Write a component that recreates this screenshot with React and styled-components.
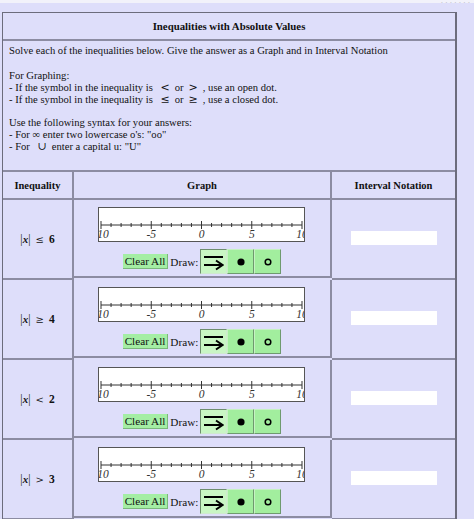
import React from 'react'
import styled, { createGlobalStyle } from 'styled-components'

const GlobalStyle = createGlobalStyle`
  html, body {
    margin: 0;
    padding: 0;
    background: #dedefa;
    font-family: "Liberation Serif", "Times New Roman", serif;
    color: #111;
  }
`

const TopStrip = styled.div`
  height: 3px;
  background: #f2f2fa;
  overflow: hidden;
  text-align: right;
  font-size: 9px;
  line-height: 0;
  color: #b8b8c4;
  padding-right: 4px;
`

const Frame = styled.div`
  margin: 9px 0 0 2px;
  width: 452px;
  border: 1px solid #6c6c7c;
  border-right: 2px solid #6c6c7c;
  border-bottom: none;
`

const Title = styled.div`
  height: 26px;
  line-height: 26px;
  text-align: center;
  font-weight: bold;
  font-size: 10.8px;
  border-bottom: 2px solid #8c8ca2;
`

const Instructions = styled.div`
  padding: 4px 6px 17px;
  font-size: 10.6px;
  line-height: 12px;
  border-bottom: 2px solid #8c8ca2;
`

const Gap = styled.div`
  height: ${p => p.$h || 12}px;
`

const Sym = styled.span`
  display: inline-block;
  margin: 0 5px;
  font-family: "DejaVu Serif", serif;
  font-size: 11px;
`

const Grid = styled.div`
  display: grid;
  grid-template-columns: 71px 258px 123px;
`

const Cell = styled.div`
  display: flex;
  align-items: center;
  justify-content: center;
  height: ${p => (p.$head ? '26px' : '78px')};
  border-bottom: 2px solid #8c8ca2;
  border-right: ${p => (p.$last ? 'none' : '2px solid #8c8ca2')};
  font-size: 10.5px;
  font-weight: ${p => (p.$head ? 'bold' : 'normal')};
`

const GraphCell = styled(Cell)`
  flex-direction: column;
  justify-content: flex-start;
  padding-top: 7px;
  box-sizing: border-box;
  gap: 7px;
`

const Ineq = styled.span`
  font-size: 11.5px;
  font-family: "Liberation Serif", serif;
  i {
    font-style: italic;
    font-weight: bold;
    font-size: 11px;
  }
  b {
    font-weight: bold;
  }
  span {
    display: inline-block;
    margin: 0 5px;
    font-family: "DejaVu Serif", serif;
    font-size: 10px;
  }
`

const LineBox = styled.svg`
  display: block;
  background: #fff;
  border: 1px solid #555;
  margin-left: -1px;
`

const Controls = styled.div`
  display: flex;
  align-items: center;
  height: 25px;
`

const ClearButton = styled.div`
  background: #a4eea4;
  font-size: 11.2px;
  line-height: 14px;
  padding: 0 2px;
  border-right: 1px solid #7ab87a;
  border-bottom: 1px solid #7ab87a;
`

const DrawLabel = styled.span`
  font-size: 11.2px;
  margin: 0 2px 0 2px;
`

const ToolGroup = styled.div`
  display: flex;
`

const Tool = styled.div`
  width: 27px;
  height: 25px;
  box-sizing: border-box;
  display: flex;
  align-items: center;
  justify-content: center;
  background: ${p => (p.$active ? '#c9f6c4' : '#a2ee9e')};
  border: 1px solid;
  border-color: ${p =>
    p.$active ? '#6e8e6e #cfe9cf #cfe9cf #6e8e6e' : '#c6f2c2 #6e9a6e #6e9a6e #c6f2c2'};
`

const Answer = styled.div`
  width: 86px;
  height: 14px;
  background: #fff;
  margin-top: -3px;
`

const NumberLine = () => {
  const ticks = []
  for (let i = 0; i <= 20; i++) {
    const x = 2 + i * 10.05
    const major = i % 5 === 0
    ticks.push(<line key={i} x1={x} x2={x} y1={major ? 13 : 15} y2={major ? 21 : 19} stroke="#333" strokeWidth="1" />)
  }
  const labels = [['-10', 2], ['-5', 52.25], ['0', 102.5], ['5', 152.75], ['10', 203]]
  return (
    <LineBox width="205" height="33" viewBox="0 0 205 33">
      <line x1="2" x2="203" y1="17" y2="17" stroke="#333" strokeWidth="1" />
      {ticks}
      {labels.map(([t, x]) => (
        <text key={t} x={x} y="30" textAnchor="middle" fontSize="11.5" fontStyle="italic"
          fontFamily="Liberation Serif, serif" fill="#333">{t}</text>
      ))}
    </LineBox>
  )
}

const ArrowIcon = () => (
  <svg width="21" height="19" viewBox="0 0 21 19">
    <line x1="1" x2="20" y1="5" y2="5" stroke="#000" strokeWidth="2" />
    <line x1="1" x2="18" y1="13" y2="13" stroke="#000" strokeWidth="2" />
    <path d="M13 8.5 L19.5 13 L13 17.5" fill="none" stroke="#000" strokeWidth="2" />
  </svg>
)

const rows = [
  { sym: '≤', n: 6 },
  { sym: '≥', n: 4 },
  { sym: '<', n: 2 },
  { sym: '>', n: 3 },
]

const Row = ({ sym, n }) => (
  <>
    <Cell>
      <Ineq>|<i>x</i>|<span>{sym}</span><b>{n}</b></Ineq>
    </Cell>
    <GraphCell>
      <NumberLine />
      <Controls>
        <ClearButton>Clear All</ClearButton>
        <DrawLabel>Draw:</DrawLabel>
        <ToolGroup>
          <Tool $active><ArrowIcon /></Tool>
          <Tool>
            <svg width="10" height="10"><circle cx="5" cy="5" r="3.6" fill="#000" /></svg>
          </Tool>
          <Tool>
            <svg width="10" height="10"><circle cx="5" cy="5" r="2.8" fill="none" stroke="#000" strokeWidth="1.5" /></svg>
          </Tool>
        </ToolGroup>
      </Controls>
    </GraphCell>
    <Cell $last>
      <Answer />
    </Cell>
  </>
)

const App = () => (
  <>
    <GlobalStyle />
    <TopStrip>. . . . . . .</TopStrip>
    <Frame>
      <Title>Inequalities with Absolute Values</Title>
      <Instructions>
        <div>Solve each of the inequalities below. Give the answer as a Graph and in Interval Notation</div>
        <Gap $h={13} />
        <div>For Graphing:</div>
        <div>- If the symbol in the inequality is <Sym>&lt;</Sym>or<Sym>&gt;</Sym>, use an open dot.</div>
        <div>- If the symbol in the inequality is <Sym>≤</Sym>or<Sym>≥</Sym>, use a closed dot.</div>
        <Gap $h={11} />
        <div>Use the following syntax for your answers:</div>
        <div>- For ∞ enter two lowercase o's: "oo"</div>
        <div>- For <Sym>∪</Sym>enter a capital u: "U"</div>
      </Instructions>
      <Grid>
        <Cell $head>Inequality</Cell>
        <Cell $head>Graph</Cell>
        <Cell $head $last>Interval Notation</Cell>
        {rows.map(r => <Row key={r.n} {...r} />)}
      </Grid>
    </Frame>
  </>
)

export default App
